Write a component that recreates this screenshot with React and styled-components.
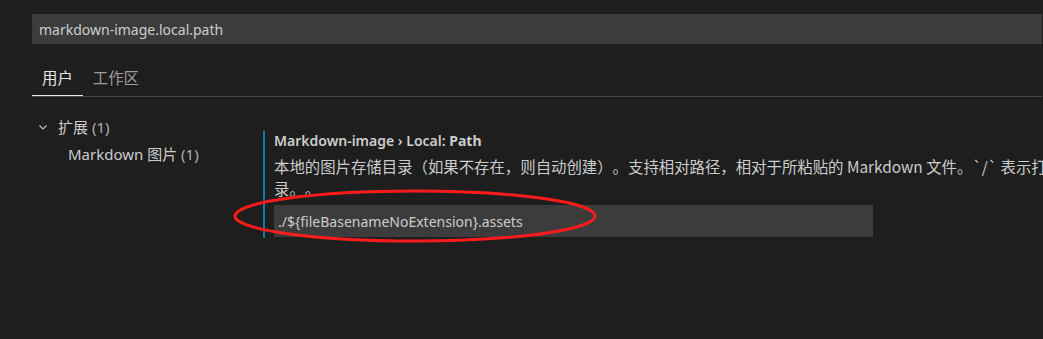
import React from 'react'
import styled, { createGlobalStyle } from 'styled-components'

const GlobalStyle = createGlobalStyle`
  html, body {
    margin: 0;
    background: #1e1e1e;
    overflow: hidden;
  }
  body {
    font-family: "Noto Sans", "Noto Sans CJK SC", sans-serif;
    color: #cccccc;
    text-spacing-trim: space-all;
  }
`

const Page = styled.div`
  position: relative;
  box-sizing: border-box;
  height: 339px;
  padding: 14px 1px 0 32px;
`

const SearchBox = styled.div`
  height: 30px;
  background: #3c3c3c;
  display: flex;
  align-items: center;
  padding: 0 7px;
  font-size: 14px;
  color: #cccccc;
`

const TabBar = styled.div`
  display: flex;
  margin-top: 17px;
  border-bottom: 1px solid #474747;
`

const Tab = styled.div`
  height: 35px;
  box-sizing: border-box;
  padding: 0 10px 2px;
  display: flex;
  align-items: center;
  font-family: "Noto Sans CJK SC", sans-serif;
  font-size: 15.4px;
  color: ${p => (p.$active ? '#e7e7e7' : '#9d9d9d')};
  border-bottom: 1px solid ${p => (p.$active ? '#e7e7e7' : 'transparent')};
`

const Body = styled.div`
  display: flex;
`

const Tree = styled.div`
  width: 231px;
  flex: none;
  padding-top: 16px;
`

const TreeRow = styled.div`
  height: 27px;
  display: flex;
  align-items: center;
  gap: 7px;
  padding-left: ${p => p.$indent}px;
  font-family: "Noto Sans", "Noto Sans CJK SC", sans-serif;
  font-size: 15px;
  color: #cccccc;
`

const Count = styled.span`
  color: #b0b0b0;
`

const Setting = styled.div`
  margin-top: 34px;
  align-self: flex-start;
  border-left: 2px solid #0e7aa5;
  padding: 0 0 1px 9px;
`

const Title = styled.div`
  line-height: 20px;
  font-size: 14px;
  font-weight: 600;
  color: #cccccc;
  white-space: nowrap;
  b {
    font-weight: 700;
  }
`

const Description = styled.div`
  width: 912px;
  margin-top: 4px;
  line-height: 22px;
  font-family: "Noto Sans CJK SC", sans-serif;
  font-size: 15.4px;
  color: #cccccc;
  text-spacing-trim: space-all;
`

const ValueBox = styled.div`
  margin-top: 6px;
  width: 599px;
  height: 32px;
  box-sizing: border-box;
  background: #3c3c3c;
  display: flex;
  align-items: center;
  padding-left: 4px;
  font-size: 14px;
  color: #cccccc;
`

const Annotation = styled.svg`
  position: absolute;
  left: 232px;
  top: 189px;
  pointer-events: none;
`

const Chevron = () => (
  <svg width="16" height="16" viewBox="0 0 16 16" fill="none">
    <path d="M4.5 6.5 L8 10 L11.5 6.5" stroke="#c5c5c5" strokeWidth="1.1" />
  </svg>
)

export default function App() {
  return (
    <Page>
      <GlobalStyle />
      <SearchBox>markdown-image.local.path</SearchBox>
      <TabBar>
        <Tab $active>用户</Tab>
        <Tab>工作区</Tab>
      </TabBar>
      <Body>
        <Tree>
          <TreeRow $indent={3}>
            <Chevron />
            <span>扩展 <Count>(1)</Count></span>
          </TreeRow>
          <TreeRow $indent={36}>
            <span>Markdown 图片 <Count>(1)</Count></span>
          </TreeRow>
        </Tree>
        <Setting>
          <Title>Markdown-image › Local: <b>Path</b></Title>
          <Description>
            本地的图片存储目录（如果不存在，则自动创建）。支持相对路径，相对于所粘贴的 Markdown 文件。`/` 表示打开的文件夹根目录。。
          </Description>
          <ValueBox>./${'{'}fileBasenameNoExtension{'}'}.assets</ValueBox>
        </Setting>
      </Body>
      <Annotation width="366" height="56" viewBox="0 0 366 56">
        <ellipse cx="183" cy="27" rx="180" ry="25" fill="none" stroke="#ff1b1b" strokeWidth="3" />
      </Annotation>
    </Page>
  )
}
